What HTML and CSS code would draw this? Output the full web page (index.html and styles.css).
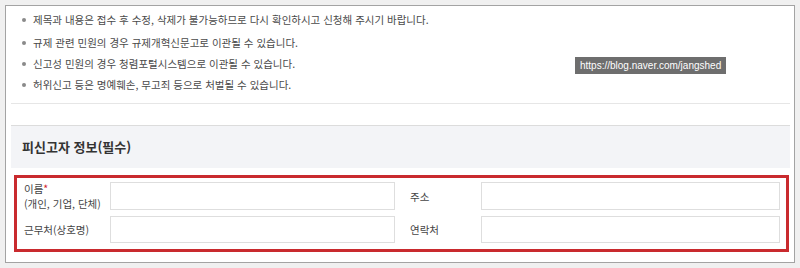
FILE: index.html
```html
<!DOCTYPE html>
<html lang="ko">
<head>
  <meta charset="utf-8">
  <title>피신고자 정보</title>
  <link rel="stylesheet" href="styles.css">
</head>
<body>
  <div class="frame">
    <div class="content">
      <ul class="notice">
        <li>제목과 내용은 접수 후 수정, 삭제가 불가능하므로 다시 확인하시고 신청해 주시기 바랍니다.</li>
        <li>규제 관련 민원의 경우 규제개혁신문고로 이관될 수 있습니다.</li>
        <li>신고성 민원의 경우 청렴포털시스템으로 이관될 수 있습니다.</li>
        <li>허위신고 등은 명예훼손, 무고죄 등으로 처벌될 수 있습니다.</li>
      </ul>

      <h2 class="section-title">피신고자 정보(필수)</h2>

      <div class="form-box">
        <label class="label" for="name">이름<span class="req">*</span><br>(개인, 기업, 단체)</label>
        <input type="text" id="name" class="field">
        <label class="label label-right" for="addr">주소</label>
        <input type="text" id="addr" class="field">

        <label class="label" for="company">근무처(상호명)</label>
        <input type="text" id="company" class="field">
        <label class="label label-right" for="tel">연락처</label>
        <input type="text" id="tel" class="field">
      </div>
    </div>
    <div class="tooltip">https://blog.naver.com/jangshed</div>
  </div>
</body>
</html>
```

FILE: styles.css
```css
* {
  box-sizing: border-box;
}

body {
  margin: 0;
  padding: 5px;
  background: #f0f0f0;
  font-family: "Noto Sans CJK KR", "Noto Sans", sans-serif;
  color: #444;
}

.frame {
  position: relative;
  height: 258px;
  background: #fff;
  border: 1px solid #a3a3a3;
}

.content {
  padding: 0 4px 0 5px;
}

.notice {
  list-style: none;
  margin: 0;
  padding: 3px 0 8px 11px;
  border-bottom: 1px solid #e6e6e6;
}

.notice li {
  position: relative;
  padding-left: 11px;
  font-size: 10.5px;
  line-height: 21px;
  color: #4a4a4a;
}

.notice li:first-child {
  margin-bottom: 2px;
}

.notice li::before {
  content: "";
  position: absolute;
  left: 0;
  top: 9px;
  width: 4px;
  height: 4px;
  border-radius: 50%;
  background: #8a8a8a;
}

.section-title {
  margin: 21px 0 0;
  height: 43px;
  padding: 0 0 0 11px;
  line-height: 42px;
  font-size: 13px;
  font-weight: bold;
  color: #333;
  background: #f3f4f7;
  border-top: 1px solid #dcdcdc;
}

.form-box {
  display: grid;
  grid-template-columns: 86px 285px 86px 299px;
  grid-template-rows: 28px 27px;
  row-gap: 6px;
  align-items: center;
  margin: 7px 1px 0 3px;
  padding: 4px 5px 6px 7px;
  border: 3px solid #c92a2e;
}

.label {
  font-size: 10.5px;
  line-height: 15px;
  color: #444;
}

.label-right {
  padding-left: 15px;
}

.req {
  color: #d0262b;
}

.field {
  height: 100%;
  width: 100%;
  margin: 0;
  border: 1px solid #dedede;
  background: #fff;
}

.tooltip {
  position: absolute;
  left: 569px;
  top: 51px;
  padding: 1px 5px;
  font-family: "Liberation Sans", Arial, sans-serif;
  font-size: 10px;
  line-height: 15px;
  color: #fff;
  background: #6e6e6e;
}
```
